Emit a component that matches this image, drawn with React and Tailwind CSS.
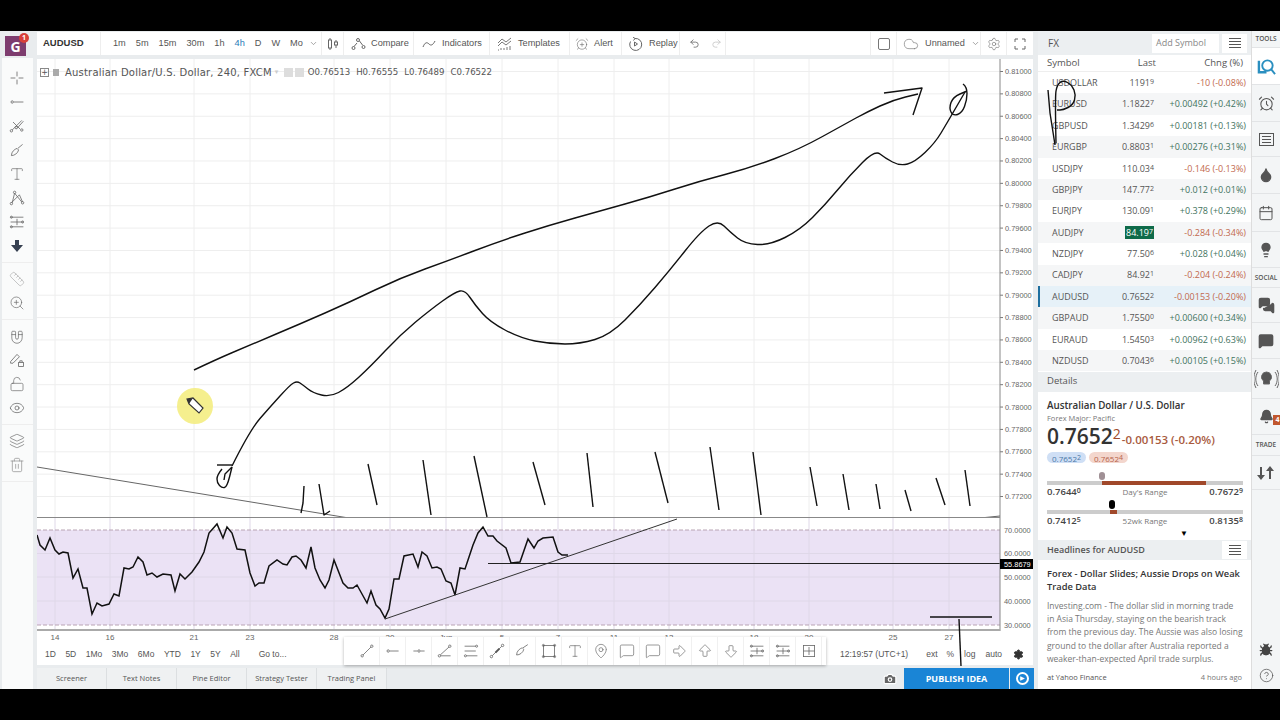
import React from "react";
import {
  AlarmClock, AlarmClockPlus, ArrowBigDown, ArrowBigRight, ArrowBigUp, Bell, Bug, Calendar, Camera, ChevronDown,
  CircleHelp, Cloud, Eye, Layers, Lightbulb, LockOpen, Magnet, MapPin, MessageSquare, MessagesSquare,
  Droplet, Redo2, Ruler, Settings, Trash2, Type, Undo2, ZoomIn,
} from "lucide-react";

const vGrid = [55, 110, 194, 250, 334, 390, 446, 502, 558, 614, 669, 754, 809, 893, 949];
const prices = ["0.81000","0.80800","0.80600","0.80400","0.80200","0.80000","0.79800","0.79600","0.79400","0.79200","0.79000","0.78800","0.78600","0.78400","0.78200","0.78000","0.77800","0.77600","0.77400","0.77200"];
const times = [["14",55],["16",110],["21",194],["23",250],["28",334],["30",390],["Jun",446],["5",502],["7",558],["11",614],["13",669],["18",754],["20",809],["25",893],["27",949]];

const rsi = "37,535 40,545 45,550 50,538 55,550 59,554 63,552 68,553 73,578 78,569 83,588 87,588 92,614 97,603 102,606 109,604 114,594 119,596 124,568 129,569 133,567 138,557 143,562 147,575 152,573 157,577 163,574 171,575 175,591 180,574 185,579 192,572 199,562 204,552 209,533 217,524 223,538 227,527 232,533 237,549 245,550 250,573 255,586 259,583 264,583 269,566 277,560 283,564 287,565 292,557 296,556 301,560 306,568 311,547 315,568 320,580 325,588 329,580 334,560 343,583 348,588 353,588 357,585 367,603 371,591 376,605 380,609 385,618 389,609 394,579 399,579 404,556 413,554 418,567 422,552 427,556 432,568 437,567 441,569 446,581 451,583 455,595 460,568 465,569 468,560 473,545 478,533 483,527 488,536 493,536 497,541 506,548 511,563 520,562 528,539 534,548 538,541 543,538 553,537 558,552 562,555 568,555";

const ink = [
  "194,370 215,360 250,345 300,324 350,302 400,278 450,260 500,241 550,225 600,211 650,197 700,181 750,168 800,149 845,124 867,112 893,100 918,94",
  "884,93 922,88 913,115",
  "963,84 967,87 967,100 962,113 953,116 949,108 953,97 967,91",
  "217,465 232,465",
  "222,469 217,475 217,483 222,488 227,487 232,467",
  "232,467 225,474 224,480",
  "232,466 250,430 270,407 290,385 297,381 303,385 313,393 330,397 347,388 370,367 400,335 430,310 455,292 465,290 475,305 490,322 520,338 550,344 580,344 610,335 640,305 670,270 700,232 718,220 730,232 745,244 770,245 800,230 825,205 850,175 875,150 885,158 900,166 915,162 935,143 947,123 965,92",
  "304,486 303,503 301,513", "319,484 324,515 330,511", "368,464 377,505", "423,460 431,515", "474,456 487,517",
  "533,462 545,505", "587,453 593,507", "655,452 668,503", "710,447 719,510", "753,452 761,515", "810,467 817,506",
  "843,474 849,510", "876,484 880,509", "905,490 911,511", "936,478 945,505", "965,470 970,506",
  "930,617 992,617", "959,619 961,666",
  "1048,90 1050,113 1055,145", "1056,143 1055,97 1057,85 1063,80 1072,85 1076,95 1073,105 1063,110 1057,110",
];

// round the corners of a hand drawn stroke
const inkPath = (str) => {
  const p = str.split(" ").map((s) => s.split(",").map(Number));
  if (p.length < 5) return "M" + p.map((a) => a.join(" ")).join("L");
  let d = `M${p[0][0]} ${p[0][1]}`;
  for (let i = 1; i < p.length - 1; i++) {
    d += `Q${p[i][0]} ${p[i][1]} ${(p[i][0] + p[i + 1][0]) / 2} ${(p[i][1] + p[i + 1][1]) / 2}`;
  }
  return d + `L${p[p.length - 1][0]} ${p[p.length - 1][1]}`;
};

const rows = [
  ["USDOLLAR","1191","9","-10","(-0.08%)",0],["EURUSD","1.1822","7","+0.00492","(+0.42%)",1],["GBPUSD","1.3429","6","+0.00181","(+0.13%)",1],
  ["EURGBP","0.8803","1","+0.00276","(+0.31%)",1],["USDJPY","110.03","4","-0.146","(-0.13%)",0],["GBPJPY","147.77","2","+0.012","(+0.01%)",1],
  ["EURJPY","130.09","1","+0.378","(+0.29%)",1],["AUDJPY","84.19","7","-0.284","(-0.34%)",0],["NZDJPY","77.50","6","+0.028","(+0.04%)",1],
  ["CADJPY","84.92","1","-0.204","(-0.24%)",0],["AUDUSD","0.7652","2","-0.00153","(-0.20%)",0],["GBPAUD","1.7550","0","+0.00600","(+0.34%)",1],
  ["EURAUD","1.5450","3","+0.00962","(+0.63%)",1],["NZDUSD","0.7043","6","+0.00105","(+0.15%)",1],
];

const Sm = ({ children }) => <span className="text-[7px] align-[2px]">{children}</span>;

const LineIcon = ({ children, size = 16 }) => (
  <svg width={size} height={size} viewBox="0 0 20 20" fill="none" stroke="#666" strokeWidth="1">{children}</svg>
);

const ListBtn = () => (
  <svg width="12" height="10" viewBox="0 0 12 10" stroke="#555"><path d="M0 .5h12M0 3.5h12M0 6.5h12M0 9.5h12" /></svg>
);

const Tb = ({ children, className = "" }) => <div className={`flex items-center h-full flex-none border-r border-[#eeeeee] ${className}`}>{children}</div>;

const sideGroups = [
  [
    <LineIcon><path d="M10 2v6M10 12v6M2 10h6M12 10h6" /></LineIcon>,
    <LineIcon><circle cx="4" cy="10" r="1.5" /><path d="M6 10h12" /></LineIcon>,
    <LineIcon><circle cx="3" cy="16" r="1.5" /><circle cx="9" cy="12" r="1.5" /><circle cx="16" cy="15" r="1.5" /><path d="M4 15 16 3M10 13l8-9M5 5l9 9" /></LineIcon>,
    <LineIcon><path d="M3 17c0-5 4-8 7-9l2 2c-1 4-5 7-9 7ZM11 8l6-5" /></LineIcon>,
    <Type size={16} color="#666" strokeWidth={1} />,
    <LineIcon><circle cx="3" cy="17" r="1.5" /><circle cx="7" cy="3" r="1.5" /><circle cx="17" cy="16" r="1.5" /><path d="M4 16 7 4l9 11M3 16 13 6l4 9" /></LineIcon>,
    <LineIcon><path d="M2 4h16M2 10h16M2 16h16M10 6v8" /><circle cx="3" cy="4" r="1.3" /><circle cx="17" cy="10" r="1.3" /><circle cx="3" cy="16" r="1.3" /></LineIcon>,
    <svg width="14" height="14" viewBox="0 0 14 14" fill="#374151"><path d="M5 1h4v5h4l-6 7-6-7h4z" /></svg>,
  ],
  [<Ruler size={16} color="#aaa" strokeWidth={1} />, <ZoomIn size={16} color="#666" strokeWidth={1} />],
  [
    <Magnet size={16} color="#666" strokeWidth={1} className="rotate-[135deg]" />,
    <LineIcon><path d="M2 12 10 3l3 3-8 8-3 0Z" /><rect x="12" y="13" width="6" height="5" /><path d="M13.5 13v-2h3v2" /></LineIcon>,
    <LockOpen size={16} color="#666" strokeWidth={1} />,
    <Eye size={16} color="#555" strokeWidth={1} />,
  ],
  [<Layers size={16} color="#666" strokeWidth={1} />, <Trash2 size={16} color="#888" strokeWidth={1} />],
];

const toolIcons = [
  <LineIcon><circle cx="4" cy="16" r="1.5" /><circle cx="16" cy="4" r="1.5" /><path d="M5 15 15 5" /></LineIcon>,
  <LineIcon><circle cx="4" cy="10" r="1.5" /><path d="M6 10h11" /></LineIcon>,
  <LineIcon><circle cx="10" cy="10" r="1.5" /><path d="M3 10h5M12 10h5" /></LineIcon>,
  <LineIcon><circle cx="3" cy="16" r="1.5" /><circle cx="16" cy="4" r="1.5" /><path d="M4 15 15 5M5 16h12" /></LineIcon>,
  <LineIcon><path d="M2 4h14M2 10h14M4 16h14" /><circle cx="17" cy="4" r="1.3" /><circle cx="3" cy="16" r="1.3" /></LineIcon>,
  <LineIcon><circle cx="3" cy="17" r="1.5" /><circle cx="17" cy="3" r="1.5" /><path d="M4 16 16 4" /><path d="M8 12l5-5" strokeWidth="2.5" stroke="#555" /></LineIcon>,
  <LineIcon><path d="M2 15c0-5 4-8 7-9l2 2c-1 4-5 7-9 7ZM10 6l6-4" /></LineIcon>,
  <LineIcon><rect x="3" y="3" width="14" height="14" /><circle cx="3" cy="3" r="1.3" /><circle cx="17" cy="3" r="1.3" /><circle cx="3" cy="17" r="1.3" /><circle cx="17" cy="17" r="1.3" /></LineIcon>,
  <Type size={16} color="#666" strokeWidth={1} />,
  <MapPin size={16} color="#666" strokeWidth={1} />,
  <MessageSquare size={16} color="#666" strokeWidth={1} />,
  <MessageSquare size={16} color="#666" strokeWidth={1} />,
  <ArrowBigRight size={16} color="#666" strokeWidth={1} />,
  <ArrowBigUp size={16} color="#666" strokeWidth={1} />,
  <ArrowBigDown size={16} color="#666" strokeWidth={1} />,
  <LineIcon><path d="M2 4h16M2 10h16M2 16h16M10 6v8" /><circle cx="3" cy="4" r="1.3" /><circle cx="17" cy="10" r="1.3" /><circle cx="3" cy="16" r="1.3" /></LineIcon>,
  <LineIcon><path d="M2 4h16M2 10h16M2 16h16M10 6v8" /><circle cx="3" cy="4" r="1.3" /><circle cx="17" cy="10" r="1.3" /><circle cx="3" cy="16" r="1.3" /></LineIcon>,
  <LineIcon><rect x="3" y="3" width="14" height="14" /><path d="M3 10h14M10 5v10" /></LineIcon>,
];

const tools = [
  ["label", "TOOLS", "h-[17px]"],
  [
    <svg width="19" height="19" viewBox="0 0 20 20" fill="none" stroke="#2a8fc0" strokeWidth="2">
      <path d="M2 4v12h8" strokeWidth="2.5" /><circle cx="11" cy="9" r="5.5" /><path d="m15 13 4 5" />
    </svg>,
    null, "h-[37px] bg-white",
  ],
  [<AlarmClock size={17} color="#555" strokeWidth={1.5} />, null, "h-[37px]"],
  [
    <svg width="15" height="13" viewBox="0 0 15 13" fill="none" stroke="#555"><rect x=".5" y=".5" width="14" height="12" /><path d="M3 3.5h9M3 6.5h9M3 9.5h9" /></svg>,
    null, "h-[35px]",
  ],
  [<Droplet size={16} color="#555" fill="#555" />, null, "h-[37px]"],
  [<Calendar size={16} color="#555" strokeWidth={1.5} />, null, "h-[38px]"],
  [<Lightbulb size={16} color="#555" fill="#555" />, null, "h-[36px]"],
  ["label", "SOCIAL", "h-[20px]"],
  [<MessagesSquare size={17} color="#555" fill="#555" />, null, "h-[35px]"],
  [<MessageSquare size={16} color="#555" fill="#555" />, null, "h-[36px]"],
  [
    <svg width="25" height="18" viewBox="0 0 25 18" fill="none" stroke="#666">
      <path d="M4 2C1 6 1 12 4 16M2 0C-1 6-1 12 2 18M21 2c3 4 3 10 0 14M23 0c3 6 3 12 0 18" />
      <path d="M12.5 2a5 5 0 0 1 3 9v3h-6v-3a5 5 0 0 1 3-9Z" fill="#555" />
    </svg>,
    null, "h-[40px]",
  ],
  [
    <span className="relative">
      <Bell size={15} color="#555" fill="#555" />
      <span className="absolute -right-[8px] top-[6px] bg-[#c1572e] text-white text-[7px] leading-[10px] px-[2px] font-bold">4</span>
    </span>,
    null, "h-[36px]",
  ],
  ["label", "TRADE", "h-[21px]"],
  [<svg width="18" height="14" viewBox="0 0 18 14" fill="#555"><path d="M3 1h2v8h3l-4 5-4-5h3zM12 13h2V5h3l-4-5-4 5h3z" /></svg>, null, "h-[34px]"],
];

const App = () => {
  return (
    <div className="relative w-[1280px] h-[720px] bg-black overflow-hidden py-[31px] font-['Open_Sans',sans-serif] text-[9.5px] text-[#555]">
      <div className="flex h-[658px] pl-[2px] bg-[#e9ecee]">
        {/* left tools */}
        <div className="w-[35px] flex-none flex flex-col">
          <div className="h-[27px] flex items-start pl-[3px] pt-[5px]">
            <div className="relative w-[21px] h-[20px] bg-[#7d3c6e] text-white text-[14px] font-bold flex items-center justify-center">
              G
              <span className="absolute -top-[3px] -right-[3px] w-[10px] h-[10px] rounded-full bg-[#d8403a] text-[7px] leading-[10px] text-center">1</span>
            </div>
          </div>
          <div className="w-[31px] flex-1 bg-[#fafbfb] flex flex-col pt-[8px]">
            {sideGroups.map((g, i) => (
              <div key={i} className="border-b border-[#eeeeee] pb-[4px] mb-[4px] flex flex-col">
                {g.map((ic, j) => (
                  <div key={j} className="h-[24px] flex items-center justify-center pr-[2px]">{ic}</div>
                ))}
              </div>
            ))}
          </div>
        </div>

        {/* center */}
        <div className="w-[998px] flex-none flex flex-col">
          <div className="h-[23px] mt-[1px] w-[996px] bg-white flex items-center font-['Liberation_Sans',sans-serif] text-[9.2px]">
            <Tb className="w-[64px] pl-[6px]"><span className="font-bold text-[#333] text-[9.5px]">AUDUSD</span></Tb>
            <Tb className="w-[221px] pl-[12px] gap-[10px]">
              {["1m","5m","15m","30m","1h"].map((t) => <span key={t}>{t}</span>)}
              <span className="text-[#2a7ab8]">4h</span>
              <span>D</span><span>W</span><span>Mo</span>
              <ChevronDown size={9} color="#888" className="-ml-[4px]" />
            </Tb>
            <Tb className="w-[22px] justify-center">
              <svg width="14" height="14" viewBox="0 0 14 14" fill="none" stroke="#666"><path d="M4 1v12M10 3v8" /><rect x="2.5" y="3" width="3" height="8" fill="#fff" /><rect x="8.5" y="5" width="3" height="3" fill="#fff" /></svg>
            </Tb>
            <Tb className="w-[70px] pl-[7px] gap-[5px]">
              <svg width="15" height="14" viewBox="0 0 15 14" fill="none" stroke="#666"><circle cx="2.5" cy="11" r="1.5" /><circle cx="7" cy="3" r="1.5" /><circle cx="12.5" cy="10" r="1.5" /><path d="M3 9.5 6 6M8.5 4l3 4" /></svg>
              <span>Compare</span>
            </Tb>
            <Tb className="w-[76px] pl-[8px] gap-[6px]">
              <svg width="14" height="10" viewBox="0 0 14 10" fill="none" stroke="#666"><path d="M1 8c2-5 4-5 6-3s4 1 6-3" /></svg>
              <span>Indicators</span>
            </Tb>
            <Tb className="w-[80px] pl-[7px] gap-[6px]">
              <svg width="15" height="14" viewBox="0 0 15 14" fill="none" stroke="#777"><path d="M1 6 5 2l4 3 5-4M1 9l4-4 4 3 5-4M1 13h1M4 13V11M7 13v-2M10 13V10M13 13V9" /></svg>
              <span>Templates</span>
            </Tb>
            <Tb className="w-[52px] pl-[5px] gap-[5px]">
              <AlarmClockPlus size={14} color="#666" strokeWidth={1} />
              <span>Alert</span>
            </Tb>
            <Tb className="w-[58px] pl-[7px] gap-[6px]">
              <svg width="14" height="14" viewBox="0 0 14 14" fill="none" stroke="#666"><path d="M6 1.5a6 6 0 1 1-4.5 3M6 1.5 4 0M6 1.5 4.5 3.5" /><path d="M5.5 5v4l3-2z" /></svg>
              <span>Replay</span>
            </Tb>
            <Tb className="w-[46px] pl-[9px] gap-[11px]">
              <Undo2 size={11} color="#777" /><Redo2 size={11} color="#ccc" />
            </Tb>
            <div className="flex-1" />
            <Tb className="w-[27px] justify-center border-l"><span className="w-[12px] h-[12px] border border-[#777] rounded-[2px]" /></Tb>
            <Tb className="w-[84px] pl-[6px] gap-[6px]">
              <Cloud size={16} color="#777" strokeWidth={1} />
              <span>Unnamed</span>
              <ChevronDown size={9} color="#888" />
            </Tb>
            <Tb className="w-[26px] justify-center"><Settings size={14} color="#666" strokeWidth={1} /></Tb>
            <div className="w-[26px] flex justify-center">
              <svg width="12" height="12" viewBox="0 0 12 12" fill="none" stroke="#666"><path d="M1 4V1h3M8 1h3v3M11 8v3H8M4 11H1V8" /></svg>
            </div>
          </div>

          <div className="mt-[4px] w-[996px] bg-white flex-none">
            {/* main pane */}
            <div className="relative h-[459px]">
              <svg className="block" width="996" height="459" viewBox="37 59 996 459">
                {vGrid.map((x) => <line key={x} x1={x} x2={x} y1="59" y2="518" stroke="#eeeeee" />)}
                {prices.map((p, i) => {
                  const y = 71.5 + i * 22.37;
                  return (
                    <g key={p}>
                      <line x1="37" x2="1000" y1={y} y2={y} stroke="#eeeeee" />
                      <line x1="1000" x2="1003" y1={y} y2={y} stroke="#777" />
                      <text x="1005" y={y + 2.5} fontSize="7.4" fill="#666" fontFamily="Liberation Sans">{p}</text>
                    </g>
                  );
                })}
                <line x1="1000" x2="1000" y1="59" y2="518" stroke="#888" />
                <line x1="37" y1="467" x2="355" y2="519" stroke="#666" />
                <line x1="970" y1="519" x2="1000" y2="516" stroke="#666" />
                <line x1="37" x2="1000" y1="517.5" y2="517.5" stroke="#888" />
              </svg>
              <div className="absolute left-[3px] top-[6px] flex items-center font-['DejaVu_Sans',sans-serif] text-[#555]">
                <span className="w-[9px] h-[9px] border border-[#888] mr-[4px] text-[8px] leading-[7px] text-center">+</span>
                <span className="w-[6px] h-[7px] bg-[#aaa] mr-[6px]" />
                <span className="text-[10px] tracking-[0.2px]">Australian Dollar/U.S. Dollar, 240, FXCM</span>
                <span className="w-[6px] mx-[3px] text-[#ccc] text-[7px]">▾</span>
                <span className="w-[9px] h-[9px] bg-[#ddd] mr-[2px]" />
                <span className="w-[9px] h-[9px] bg-[#ddd] mr-[4px]" />
                <div className="flex gap-[6px] text-[8.6px]">
                  <span>O0.76513</span><span>H0.76555</span><span>L0.76489</span><span>C0.76522</span>
                </div>
              </div>
            </div>

            {/* rsi pane */}
            <svg className="block" width="996" height="113" viewBox="37 518 996 113">
              <rect x="37" y="530" width="963" height="95" fill="#ebe2f5" />
              {vGrid.map((x) => <line key={x} x1={x} x2={x} y1="518" y2="631" stroke="#dfd8e8" />)}
              {[553.5, 577, 601].map((y) => <line key={y} x1="37" x2="1000" y1={y} y2={y} stroke="#dfd8e8" />)}
              <line x1="37" x2="1000" y1="530" y2="530" stroke="#b9a4b4" strokeDasharray="4 2" />
              <line x1="37" x2="1000" y1="625" y2="625" stroke="#b9a4b4" strokeDasharray="4 2" />
              <polyline points={rsi} fill="none" stroke="#111" strokeWidth="1.5" />
              <line x1="385" y1="619" x2="677" y2="519" stroke="#333" />
              <line x1="488" y1="563.5" x2="1000" y2="563.5" stroke="#222" />
              <line x1="1000" x2="1000" y1="518" y2="631" stroke="#888" />
              <line x1="37" x2="1000" y1="630" y2="630" stroke="#aaa" strokeWidth="2" />
              {[["70.0000",530],["60.0000",553.5],["50.0000",577],["40.0000",601],["30.0000",625]].map(([t, y]) => (
                <text key={t} x="1004" y={y + 2.5} fontSize="7.4" fill="#666" fontFamily="Liberation Sans">{t}</text>
              ))}
              <rect x="1000" y="559" width="33" height="10" fill="#000" />
              <text x="1004" y="566.5" fontSize="7.4" fill="#fff" fontFamily="Liberation Sans">55.8679</text>
            </svg>

            {/* time axis */}
            <svg className="block" width="996" height="13" viewBox="37 632 996 13">
              {times.map(([t, x]) => <text key={t} x={x} y="641" fontSize="8" fill="#666" textAnchor="middle" fontFamily="Liberation Sans">{t}</text>)}
            </svg>

            {/* range row */}
            <div className="relative h-[21px] flex items-center pl-[8px] font-['Liberation_Sans',sans-serif] text-[8.5px]">
              <div className="flex gap-[9.5px] pr-[19px]">
                {["1D","5D","1Mo","3Mo","6Mo","YTD","1Y","5Y","All"].map((t) => <span key={t}>{t}</span>)}
              </div>
              <span>Go to...</span>
              <div className="flex-1" />
              <span className="mr-[18px]">12:19:57 (UTC+1)</span>
              <span className="mr-[9px]">ext</span>
              <span className="mr-[10px]">%</span>
              <span className="mr-[10px]">log</span>
              <span className="mr-[11px]">auto</span>
              <Settings size={11} color="#333" fill="#333" className="mr-[9px]" />
              <div className="absolute left-[307px] -top-[7px] h-[28px] w-[482px] bg-white shadow-[0_1px_3px_rgba(0,0,0,0.3)] flex items-center pl-[10px]">
                {toolIcons.map((ic, i) => (
                  <div key={i} className="w-[26px] h-full flex items-center justify-center border-r border-[#f0f0f0]">{ic}</div>
                ))}
              </div>
            </div>
          </div>

          {/* bottom tabs */}
          <div className="flex-1 flex items-end text-[7.5px]">
            {["Screener","Text Notes","Pine Editor","Strategy Tester","Trading Panel"].map((t) => (
              <div key={t} className="w-[70px] h-[21px] flex items-center justify-center border-r border-[#dcdfe1] bg-[#eff1f2]">{t}</div>
            ))}
            <div className="flex-1" />
            <Camera size={14} color="#fff" fill="#666" className="mb-[3px] mr-[7px]" />
            <div className="w-[105px] h-[21px] bg-[#1a85d6] text-white text-[9px] font-bold flex items-center justify-center">PUBLISH IDEA</div>
            <div className="w-[24px] h-[21px] ml-[1px] mr-[1px] bg-[#1a85d6] flex items-center justify-center">
              <span className="w-[13px] h-[13px] rounded-full border-2 border-white flex items-center justify-center text-white text-[6px]">▶</span>
            </div>
          </div>
        </div>

        {/* right panel */}
        <div className="w-[245px] flex-none flex pl-[3px]">
          <div className="w-[213px] flex-none flex flex-col">
            <div className="h-[24px] flex-none bg-[#eceff1] flex items-center pl-[10px] pr-[4px] text-[10px]">
              <span className="flex-1">FX</span>
              <span className="w-[67px] h-[19px] bg-white flex items-center pl-[4px] text-[9px] text-[#888]">Add Symbol</span>
              <span className="w-[25px] h-[19px] bg-white ml-[3px] flex items-center justify-center"><ListBtn /></span>
            </div>
            <div className="h-[17px] flex-none bg-white flex items-center pl-[9px] pr-[8px] border-b border-[#eeeeee]">
              <span className="w-[76px]">Symbol</span><span className="w-[33px] text-right">Last</span><span className="flex-1 text-right">Chng (%)</span>
            </div>
            <div className="h-[299.6px] flex-none bg-white">
              {rows.map((r, i) => (
                <div key={r[0]} className={`relative h-[21.4px] flex items-center text-[9px] pl-[14px] pr-[5px] ${r[0] === "AUDUSD" ? "bg-[#e6f1f8]" : i % 2 ? "bg-[#f5f6f7]" : "bg-white"}`}>
                  {r[0] === "AUDUSD" && <span className="absolute left-0 top-0 bottom-0 w-[2px] bg-[#1f6f9f]" />}
                  <span className="w-[62px]">{r[0]}</span>
                  <span className="w-[40px] text-right">
                    {r[0] === "AUDJPY" ? <span className="bg-[#0f6b4a] text-white px-[1px]">{r[1]}<Sm>{r[2]}</Sm></span> : <>{r[1]}<Sm>{r[2]}</Sm></>}
                  </span>
                  <span className={`flex-1 text-right ${r[5] ? "text-[#3f7360]" : "text-[#c2694d]"}`}>{r[3]} {r[4]}</span>
                </div>
              ))}
            </div>

            <div className="h-[20px] flex-none bg-[#eceff1] flex items-center pl-[9px]">Details</div>
            <div className="h-[148px] flex-none bg-white pl-[9px] pr-[8px] pt-[7px] flex flex-col">
              <div className="text-[9.8px] font-semibold text-[#333] leading-[14px]">Australian Dollar / U.S. Dollar</div>
              <div className="text-[7.5px] text-[#777] leading-[10px]">Forex Major: Pacific</div>
              <div className="flex items-baseline h-[25px] mt-[1px]">
                <span className="text-[21px] font-semibold text-[#333] leading-[25px]">0.7652</span>
                <span className="text-[14px] text-[#a04a2c] relative -top-[5px]">2</span>
                <span className="ml-[1px] text-[11.5px] font-semibold text-[#a85a3e]">-0.00153 (-0.20%)</span>
              </div>
              <div className="flex gap-[3px] mt-[3px] text-[8px]">
                <span className="h-[11px] leading-[11px] px-[5px] rounded-full bg-[#cfdff5] text-[#4a78a8]">0.7652<Sm>2</Sm></span>
                <span className="h-[11px] leading-[11px] px-[5px] rounded-full bg-[#f3d6cd] text-[#b5624a]">0.7652<Sm>4</Sm></span>
              </div>
              <div className="relative h-[4px] flex-none bg-[#cccccc] mt-[18px]">
                <span className="absolute left-[55px] w-[104px] h-full bg-[#a0482a]" />
                <span className="absolute left-[52px] -top-[9px] w-[6px] h-[8px] rounded-full bg-[#a09095]" />
              </div>
              <div className="flex items-center h-[15px] font-semibold text-[#444]">
                <span>0.7644<Sm>0</Sm></span>
                <span className="flex-1 text-center text-[8px] font-normal text-[#777]">Day's Range</span>
                <span>0.7672<Sm>9</Sm></span>
              </div>
              <div className="relative h-[4px] flex-none bg-[#cccccc] mt-[10px]">
                <span className="absolute left-[63px] w-[7px] h-full bg-[#a0482a]" />
                <span className="absolute left-[62px] -top-[10px] w-[6px] h-[9px] rounded-full bg-black" />
              </div>
              <div className="flex items-center h-[15px] font-semibold text-[#444]">
                <span>0.7412<Sm>5</Sm></span>
                <span className="flex-1 text-center text-[8px] font-normal text-[#777]">52wk Range</span>
                <span>0.8135<Sm>8</Sm></span>
              </div>
              <div className="flex justify-center pl-[78px] h-[6px] mt-[1px]">
                <span className="text-[8px] leading-[6px] text-black">▼</span>
              </div>
            </div>

            <div className="h-[20px] flex-none bg-[#eceff1] flex items-center pl-[9px] pr-[4px] font-semibold text-[9px]">
              <span className="flex-1">Headlines for AUDUSD</span>
              <span className="w-[25px] h-[18px] bg-white flex items-center justify-center"><ListBtn /></span>
            </div>
            <div className="flex-1 bg-white pl-[9px] pr-[6px] pt-[7px]">
              <div className="text-[9.3px] font-semibold text-[#333] leading-[13.5px]">Forex - Dollar Slides; Aussie Drops on Weak Trade Data</div>
              <div className="text-[8.5px] whitespace-nowrap text-[#777] leading-[13.4px] mt-[5px]">
                Investing.com - The dollar slid in morning trade<br />
                in Asia Thursday, staying on the bearish track<br />
                from the previous day. The Aussie was also losing<br />
                ground to the dollar after Australia reported a<br />
                weaker-than-expected April trade surplus.
              </div>
              <div className="flex justify-between text-[7.5px] mt-[6px] pr-[3px]">
                <span>at Yahoo Finance</span><span className="text-[#777]">4 hours ago</span>
              </div>
            </div>
          </div>

          <div className="w-[29px] flex-none flex flex-col bg-[#f3f5f6] border-l border-[#dddddd]">
            {tools.map((t, i) => (
              <div key={i} className={`flex items-center justify-center border-b border-[#e2e4e6] ${t[2]}`}>
                {t[0] === "label" ? <span className="text-[6.5px] font-semibold">{t[1]}</span> : t[0]}
              </div>
            ))}
            <div className="flex-1" />
            <div className="h-[24px] flex items-center justify-center"><Bug size={14} color="#444" fill="#444" /></div>
            <div className="h-[27px] flex items-center justify-center"><CircleHelp size={15} color="#555" strokeWidth={1.2} /></div>
          </div>
        </div>
      </div>

      {/* hand drawn marks and pen cursor on top of the video */}
      <svg className="absolute inset-0 pointer-events-none" width="1280" height="720" viewBox="0 0 1280 720" fill="none">
        {ink.map((p, i) => <path key={i} d={inkPath(p)} stroke="#111" strokeWidth="1.4" strokeLinejoin="round" />)}
        <circle cx="195" cy="406" r="18" fill="#f3ec7a" fillOpacity="0.85" />
        <path d="M187 399 193 398 203 408 199 413 189 404Z" fill="#fff" stroke="#333" strokeWidth="1.2" />
        <path d="M187 399 193 398 189 404Z" fill="#333" />
      </svg>
    </div>
  );
};

export default App;
